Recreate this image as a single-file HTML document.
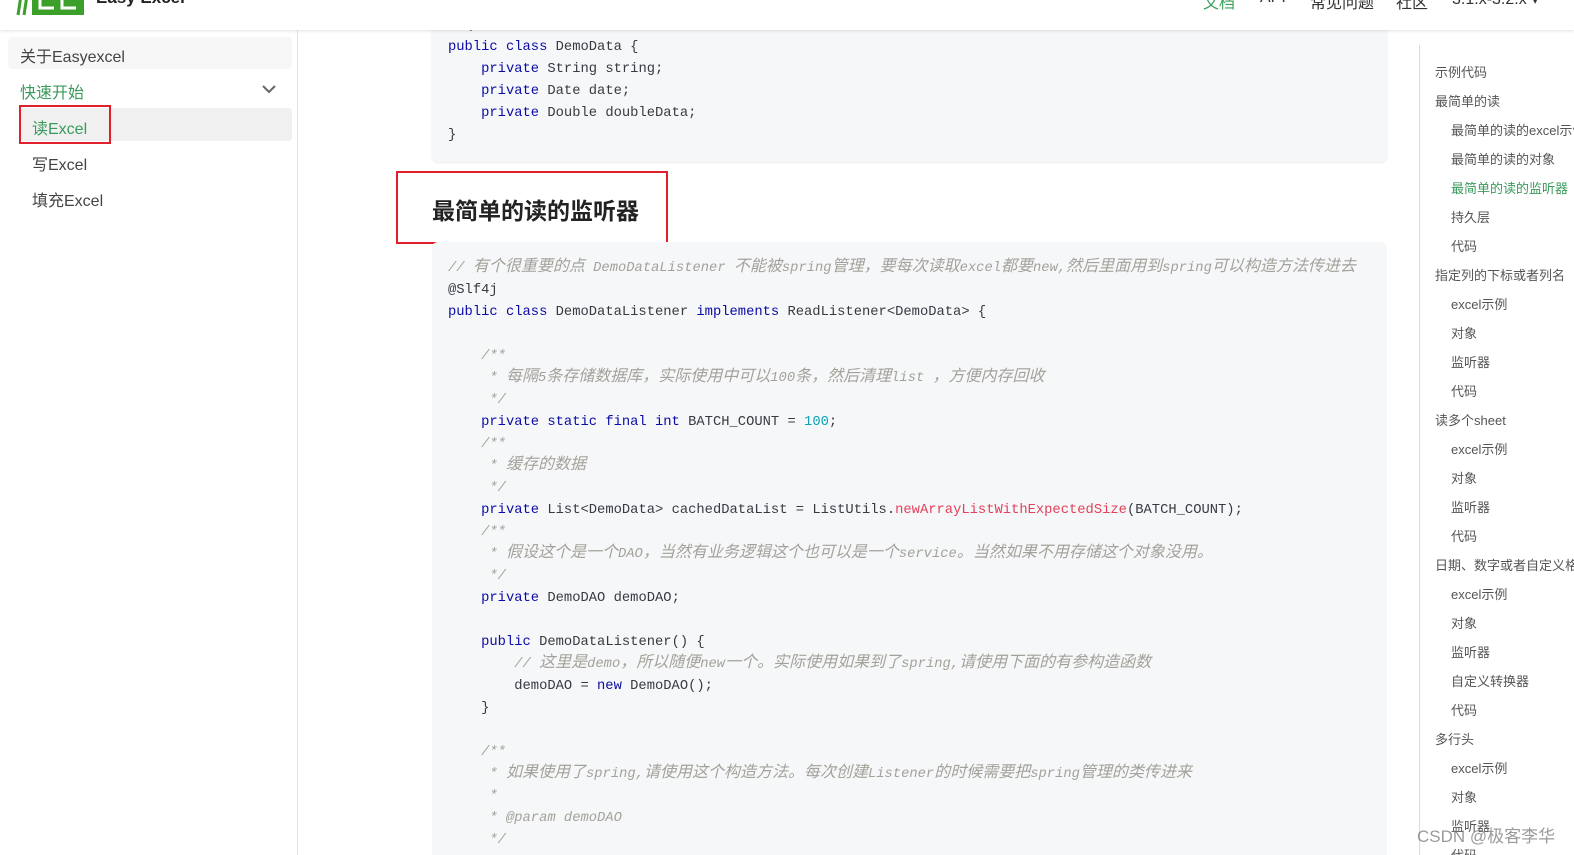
<!DOCTYPE html>
<html><head><meta charset="utf-8">
<style>
*{margin:0;padding:0;box-sizing:border-box}
html,body{width:1574px;height:855px;overflow:hidden}
body{background:#fff;font-family:"Liberation Sans","Noto Sans CJK SC",sans-serif}
#root{position:relative;width:1574px;height:855px;overflow:hidden}
.hdr{position:absolute;left:0;top:0;width:1574px;height:30px;background:#fff;box-shadow:0 1px 3px rgba(0,0,0,.12);z-index:5;overflow:hidden}
.logo{position:absolute;left:16px;top:-14px}
.brand{position:absolute;left:96px;top:-12px;font-size:17px;font-weight:bold;color:#222}
.nav{position:absolute;top:-11px;font-size:16px;color:#333;white-space:nowrap}
.side{position:absolute;left:0;top:30px;width:298px;height:825px;border-right:1px solid #e6e6e6}
.si{position:absolute;font-size:16px;color:#444}
pre{font-family:"Liberation Mono","Noto Sans CJK SC",monospace;font-size:13.8px;line-height:22px;color:#383a42;white-space:pre}
.cb{position:absolute;left:432px;width:955px;background:#f6f7f9;border-radius:6px;overflow:hidden}
.k{color:#0b0ba6}.c{color:#a3a29a;font-style:italic}.n{color:#0aa4b4}.f{color:#e4405a}
.z{font-size:16px;line-height:0}
.toc{position:absolute;left:1419px;top:45px;width:1px;height:810px;background:#dcdcdc}
.t{position:absolute;font-size:13px;color:#555;white-space:nowrap}
</style></head><body><div id="root">
<div class="hdr">
<svg class="logo" width="70" height="30" viewBox="0 0 70 30"><path d="M2 29 L6 3 M8 29 L12 3" stroke="#3aa02a" stroke-width="3"/><rect x="16" y="0" width="52" height="29" fill="#3aa02a"/><path d="M24 6 V22 H38 M46 6 V22 H60" stroke="#fff" stroke-width="3" fill="none"/></svg>
<div class="brand">Easy Excel</div>
<div class="nav" style="left:1203px;color:#3aa05a">文档</div>
<div class="nav" style="left:1260px">API</div>
<div class="nav" style="left:1310px">常见问题</div>
<div class="nav" style="left:1396px">社区</div>
<div class="nav" style="left:1452px">3.1.x-3.2.x ▾</div>
</div>
<div class="side">
<div style="position:absolute;left:8px;top:7px;width:284px;height:32px;background:#f7f7f7;border-radius:4px"></div>
<div class="si" style="left:20px;top:13px">关于Easyexcel</div>
<div class="si" style="left:20px;top:49px;color:#3a9a5c">快速开始</div>
<svg style="position:absolute;left:261px;top:53px" width="16" height="12"><path d="M2 3 L8 9 L14 3" stroke="#666" stroke-width="2" fill="none"/></svg>
<div style="position:absolute;left:20px;top:78px;width:272px;height:33px;background:#f0f0f0;border-radius:4px"></div>
<div style="position:absolute;left:19px;top:75px;width:92px;height:39px;border:2px solid #e0202a"></div>
<div class="si" style="left:32px;top:85px;color:#3a9a5c">读Excel</div>
<div class="si" style="left:32px;top:121px">写Excel</div>
<div class="si" style="left:32px;top:157px">填充Excel</div>
</div>
<div class="cb" style="top:0;height:162px;box-shadow:0 1px 2px rgba(0,0,0,.08)"><pre style="position:absolute;left:16px;top:15px">@EqualsAndHashCode
<span class="k">public class</span> DemoData {
    <span class="k">private</span> String string;
    <span class="k">private</span> Date date;
    <span class="k">private</span> Double doubleData;
}</pre></div>
<div style="position:absolute;left:396px;top:171px;width:272px;height:73px;border:2px solid #e0202a"></div>
<div style="position:absolute;left:432px;top:192px;font-size:23px;font-weight:bold;color:#222">最简单的读的监听器</div>
<div class="cb" style="top:242px;height:613px;border-radius:6px 6px 0 0"><pre style="position:absolute;left:16px;top:16px"><span class="c">// <span class="z">有个很重要的点</span> DemoDataListener <span class="z">不能被</span>spring<span class="z">管理，要每次读取</span>excel<span class="z">都要</span>new,<span class="z">然后里面用到</span>spring<span class="z">可以构造方法传进去</span></span>
@Slf4j
<span class="k">public class</span> DemoDataListener <span class="k">implements</span> ReadListener&lt;DemoData&gt; {

    <span class="c">/**
     * <span class="z">每隔</span>5<span class="z">条存储数据库，实际使用中可以</span>100<span class="z">条，然后清理</span>list <span class="z">，方便内存回收</span>
     */</span>
    <span class="k">private static final int</span> BATCH_COUNT = <span class="n">100</span>;
    <span class="c">/**
     * <span class="z">缓存的数据</span>
     */</span>
    <span class="k">private</span> List&lt;DemoData&gt; cachedDataList = ListUtils.<span class="f">newArrayListWithExpectedSize</span>(BATCH_COUNT);
    <span class="c">/**
     * <span class="z">假设这个是一个</span>DAO<span class="z">，当然有业务逻辑这个也可以是一个</span>service<span class="z">。当然如果不用存储这个对象没用。</span>
     */</span>
    <span class="k">private</span> DemoDAO demoDAO;

    <span class="k">public</span> DemoDataListener() {
        <span class="c">// <span class="z">这里是</span>demo<span class="z">，所以随便</span>new<span class="z">一个。实际使用如果到了</span>spring,<span class="z">请使用下面的有参构造函数</span></span>
        demoDAO = <span class="k">new</span> DemoDAO();
    }

    <span class="c">/**
     * <span class="z">如果使用了</span>spring,<span class="z">请使用这个构造方法。每次创建</span>Listener<span class="z">的时候需要把</span>spring<span class="z">管理的类传进来</span>
     *
     * @param demoDAO
     */</span></pre></div>
<div class="toc"></div>
<div class="t" style="left:1435px;top:62px">示例代码</div>
<div class="t" style="left:1435px;top:91px">最简单的读</div>
<div class="t" style="left:1451px;top:120px">最简单的读的excel示例</div>
<div class="t" style="left:1451px;top:149px">最简单的读的对象</div>
<div class="t" style="left:1451px;top:178px;color:#3a9a5c">最简单的读的监听器</div>
<div class="t" style="left:1451px;top:207px">持久层</div>
<div class="t" style="left:1451px;top:236px">代码</div>
<div class="t" style="left:1435px;top:265px">指定列的下标或者列名</div>
<div class="t" style="left:1451px;top:294px">excel示例</div>
<div class="t" style="left:1451px;top:323px">对象</div>
<div class="t" style="left:1451px;top:352px">监听器</div>
<div class="t" style="left:1451px;top:381px">代码</div>
<div class="t" style="left:1435px;top:410px">读多个sheet</div>
<div class="t" style="left:1451px;top:439px">excel示例</div>
<div class="t" style="left:1451px;top:468px">对象</div>
<div class="t" style="left:1451px;top:497px">监听器</div>
<div class="t" style="left:1451px;top:526px">代码</div>
<div class="t" style="left:1435px;top:555px">日期、数字或者自定义格式转换</div>
<div class="t" style="left:1451px;top:584px">excel示例</div>
<div class="t" style="left:1451px;top:613px">对象</div>
<div class="t" style="left:1451px;top:642px">监听器</div>
<div class="t" style="left:1451px;top:671px">自定义转换器</div>
<div class="t" style="left:1451px;top:700px">代码</div>
<div class="t" style="left:1435px;top:729px">多行头</div>
<div class="t" style="left:1451px;top:758px">excel示例</div>
<div class="t" style="left:1451px;top:787px">对象</div>
<div class="t" style="left:1451px;top:816px">监听器</div>
<div class="t" style="left:1451px;top:845px">代码</div>
<div style="position:absolute;left:1417px;top:822px;font-size:17px;color:rgba(120,120,120,.75);white-space:nowrap">CSDN @极客李华</div>
</div></body></html>
